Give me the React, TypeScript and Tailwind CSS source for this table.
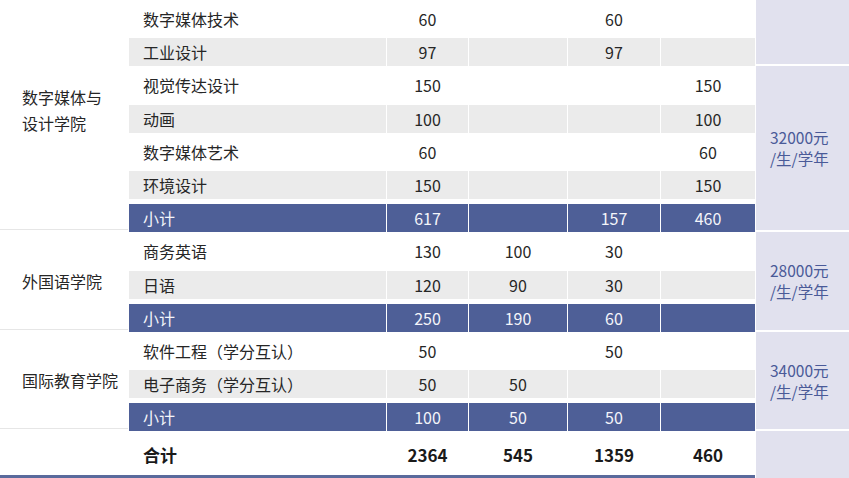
import React from "react";

type Row = { name: string; v: string[]; kind: "w" | "g" | "b" };

const rows: Row[] = [
  { name: "数字媒体技术", v: ["60", "", "60", ""], kind: "w" },
  { name: "工业设计", v: ["97", "", "97", ""], kind: "g" },
  { name: "视觉传达设计", v: ["150", "", "", "150"], kind: "w" },
  { name: "动画", v: ["100", "", "", "100"], kind: "g" },
  { name: "数字媒体艺术", v: ["60", "", "", "60"], kind: "w" },
  { name: "环境设计", v: ["150", "", "", "150"], kind: "g" },
  { name: "小计", v: ["617", "", "157", "460"], kind: "b" },
  { name: "商务英语", v: ["130", "100", "30", ""], kind: "w" },
  { name: "日语", v: ["120", "90", "30", ""], kind: "g" },
  { name: "小计", v: ["250", "190", "60", ""], kind: "b" },
  { name: "软件工程（学分互认）", v: ["50", "", "50", ""], kind: "w" },
  { name: "电子商务（学分互认）", v: ["50", "50", "", ""], kind: "g" },
  { name: "小计", v: ["100", "50", "50", ""], kind: "b" },
];

function bgOf(kind: Row["kind"]) {
  if (kind === "g") return "bg-[#ebebeb] text-[#262626]";
  if (kind === "b") return "bg-[#4e5f97] text-[#f4f5fa]";
  return "bg-white text-[#262626]";
}

function College({ lines, span, extra }: { lines: string[]; span: string; extra?: string }) {
  return (
    <div className={`${span} flex`}>
      <div
        className={`flex-1 flex items-center pl-[22px] mb-[2px] border-b border-[#e6e6e6] text-[16px] leading-[26px] text-[#262626] ${extra ?? ""}`}
      >
        <div>
          {lines.map((l, i) => (
            <div key={i}>{l}</div>
          ))}
        </div>
      </div>
    </div>
  );
}

function Tuition({ span, text }: { span: string; text?: string }) {
  return (
    <div className={`${span} flex`}>
      <div className="flex-1 mb-[2px] bg-[#e1e1ee] flex items-center pl-[14px] text-[15.5px] leading-[21px] text-[#4a5a98]">
        {text ? (
          <div>
            <div>{text}</div>
            <div>/生/学年</div>
          </div>
        ) : null}
      </div>
    </div>
  );
}

function Cells({ r }: { r: Row }) {
  const c = bgOf(r.kind);
  return (
    <>
      <div className="pt-[5px]">
        <div className={`h-[28px] flex items-center pl-[14px] text-[16px] ${c}`}>{r.name}</div>
      </div>
      {r.v.map((x, i) => (
        <div key={i} className="pt-[5px]">
          <div className={`h-[28px] flex items-center justify-center text-[16px] ${c}`}>{x}</div>
        </div>
      ))}
    </>
  );
}

export default function App() {
  return (
    <div
      className="w-[849px] h-[478px] overflow-hidden bg-white"
      style={{ fontFamily: '"Noto Sans CJK SC", "Noto Sans", sans-serif' }}
    >
      <div className="grid grid-cols-[128px_257px_81px_98px_92px_94px_93px] grid-rows-[repeat(13,33.2px)_43.4px_20px] gap-x-px">
        {/* row 1 */}
        <College lines={["数字媒体与", "设计学院"]} span="row-span-7" extra="pb-[10px]" />
        <Cells r={rows[0]} />
        <Tuition span="row-span-2" />
        {/* row 2 */}
        <Cells r={rows[1]} />
        {/* row 3 */}
        <Cells r={rows[2]} />
        <Tuition span="row-span-5" text="32000元" />
        <Cells r={rows[3]} />
        <Cells r={rows[4]} />
        <Cells r={rows[5]} />
        <Cells r={rows[6]} />
        {/* row 8 */}
        <College lines={["外国语学院"]} span="row-span-3" />
        <Cells r={rows[7]} />
        <Tuition span="row-span-3" text="28000元" />
        <Cells r={rows[8]} />
        <Cells r={rows[9]} />
        {/* row 11 */}
        <College lines={["国际教育学院"]} span="row-span-3" />
        <Cells r={rows[10]} />
        <Tuition span="row-span-3" text="34000元" />
        <Cells r={rows[11]} />
        <Cells r={rows[12]} />
        {/* row 14 */}
        <div />
        <div className="flex items-center pl-[14px] pt-[4px] text-[17px] font-bold text-[#1a1a1a]">合计</div>
        <div className="flex items-center justify-center pt-[4px] text-[17px] font-bold text-[#1a1a1a]">2364</div>
        <div className="flex items-center justify-center pt-[4px] text-[17px] font-bold text-[#1a1a1a]">545</div>
        <div className="flex items-center justify-center pt-[4px] text-[17px] font-bold text-[#1a1a1a]">1359</div>
        <div className="flex items-center justify-center pt-[4px] text-[17px] font-bold text-[#1a1a1a]">460</div>
        <div className="row-span-2 bg-[#e1e1ee]" />
        {/* row 15 */}
        <div className="col-span-6 bg-[#5a6a9c]" />
      </div>
    </div>
  );
}
